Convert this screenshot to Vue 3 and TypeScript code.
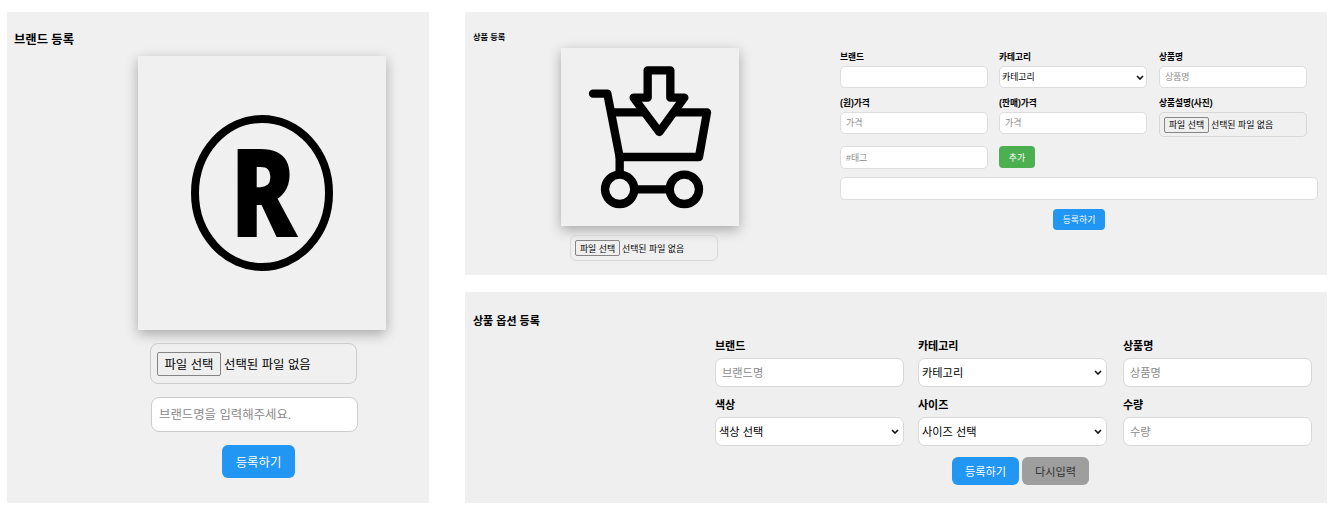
<script setup lang="ts">
interface Field {
  label: string
  kind: 'input' | 'select' | 'file'
  text: string
}

const productFields: Field[] = [
  { label: '브랜드', kind: 'input', text: '' },
  { label: '카테고리', kind: 'select', text: '카테고리' },
  { label: '상품명', kind: 'input', text: '상품명' },
  { label: '(원)가격', kind: 'input', text: '가격' },
  { label: '(판매)가격', kind: 'input', text: '가격' },
  { label: '상품설명(사진)', kind: 'file', text: '' },
]

const optionFields: Field[] = [
  { label: '브랜드', kind: 'input', text: '브랜드명' },
  { label: '카테고리', kind: 'select', text: '카테고리' },
  { label: '상품명', kind: 'input', text: '상품명' },
  { label: '색상', kind: 'select', text: '색상 선택' },
  { label: '사이즈', kind: 'select', text: '사이즈 선택' },
  { label: '수량', kind: 'input', text: '수량' },
]
</script>

<template>
  <main class="page">
    <section class="panel brand">
      <h2 class="brand-title">브랜드 등록</h2>
      <div class="preview brand-preview">
        <svg viewBox="0 0 248 274" width="248" height="274">
          <ellipse cx="124" cy="137" rx="67" ry="74" fill="none" stroke="#000" stroke-width="8" />
          <text x="92" y="181" class="logo-r" textLength="67" lengthAdjust="spacingAndGlyphs">R</text>
        </svg>
      </div>
      <div class="file brand-file">
        <button type="button" class="file-btn">파일 선택</button>
        <span>선택된 파일 없음</span>
      </div>
      <input class="control brand-input" type="text" placeholder="브랜드명을 입력해주세요." />
      <button type="button" class="btn blue brand-submit">등록하기</button>
    </section>

    <div class="right">
      <section class="panel product">
        <div class="product-left">
          <h2 class="product-title">상품 등록</h2>
          <div class="preview product-preview">
            <svg viewBox="303 113 532 534" width="178" height="178">
              <g fill="none" stroke="#000" stroke-width="25" stroke-linecap="round" stroke-linejoin="round">
                <path d="M398 250H441L478 440V490" />
                <path d="M455 306H545M650 306H740L716 440H478" />
                <path d="M562 180H630V262H672L597 365L520 262H562Z" />
                <circle cx="478" cy="537" r="44" />
                <circle cx="672" cy="537" r="44" />
                <path d="M522 537H628" />
              </g>
            </svg>
          </div>
          <div class="file product-file">
            <button type="button" class="file-btn">파일 선택</button>
            <span>선택된 파일 없음</span>
          </div>
        </div>

        <div class="product-form">
          <div class="product-grid">
            <div v-for="f in productFields" :key="f.label" class="product-field">
              <label>{{ f.label }}</label>
              <select v-if="f.kind === 'select'" class="control">
                <option>{{ f.text }}</option>
              </select>
              <div v-else-if="f.kind === 'file'" class="file grid-file">
                <button type="button" class="file-btn">파일 선택</button>
                <span>선택된 파일 없음</span>
              </div>
              <input v-else class="control" type="text" :placeholder="f.text" />
            </div>
          </div>
          <div class="tag-row">
            <input class="control tag-input" type="text" placeholder="#태그" />
            <button type="button" class="btn green">추가</button>
          </div>
          <input class="control wide-input" type="text" />
          <div class="product-actions">
            <button type="button" class="btn blue">등록하기</button>
          </div>
        </div>
      </section>

      <section class="panel option">
        <h2 class="option-title">상품 옵션 등록</h2>
        <div class="option-form">
          <div class="option-grid">
            <div v-for="f in optionFields" :key="f.label" class="option-field">
              <label>{{ f.label }}</label>
              <select v-if="f.kind === 'select'" class="control">
                <option>{{ f.text }}</option>
              </select>
              <input v-else class="control" type="text" :placeholder="f.text" />
            </div>
          </div>
          <div class="option-actions">
            <button type="button" class="btn blue">등록하기</button>
            <button type="button" class="btn gray">다시입력</button>
          </div>
        </div>
      </section>
    </div>
  </main>
</template>

<style>
html,
body {
  margin: 0;
  background: #fff;
}
</style>

<style scoped>
* {
  box-sizing: border-box;
}

.page {
  display: flex;
  gap: 36px;
  padding: 12px 0 0 7px;
  font-family: "Liberation Sans", "Noto Sans CJK KR", sans-serif;
  color: #000;
}

.panel {
  background: #f0f0f0;
}

h2 {
  margin: 0;
  font-weight: 700;
}

.preview {
  background: #f0f0f0;
  box-shadow: 0 4px 12px rgba(0, 0, 0, 0.3);
}

.preview svg {
  display: block;
}

.logo-r {
  font-family: "Open Sans", sans-serif;
  font-weight: 800;
  font-size: 123px;
  fill: #000;
}

.control {
  display: block;
  width: 100%;
  background: #fff;
  border: 1px solid #ccc;
  border-radius: 8px;
  font-family: inherit;
  color: #000;
  outline: none;
}

.control::placeholder {
  color: #8a8a8a;
}

select.control {
  appearance: none;
  -webkit-appearance: none;
  padding: 0;
  background-image: url("data:image/svg+xml,%3Csvg xmlns='http://www.w3.org/2000/svg' viewBox='0 0 8 5'%3E%3Cpath d='M1 1l3 3 3-3' fill='none' stroke='%23111' stroke-width='1.6'/%3E%3C/svg%3E");
  background-repeat: no-repeat;
}

.file {
  display: flex;
  align-items: center;
  border: 1px solid #ccc;
  border-radius: 8px;
}

.file-btn {
  flex: none;
  padding: 0;
  background: #efefef;
  border: 1px solid #858585;
  border-radius: 2px;
  font-family: inherit;
  font-size: inherit;
  color: #000;
}

.btn {
  display: block;
  padding: 0;
  border: none;
  border-radius: 6px;
  font-family: inherit;
  color: #fff;
}

.blue {
  background: #2196f3;
}

.green {
  background: #4caf50;
}

.gray {
  background: #9e9e9e;
  color: #333;
}

/* Brand panel */
.brand {
  flex: none;
  width: 422px;
  height: 491px;
  padding-top: 20px;
}

.brand-title {
  margin: 0 0 8px 7px;
  font-size: 12.3px;
  line-height: 16px;
}

.brand-preview {
  width: 248px;
  height: 274px;
  margin-left: 131px;
}

.brand-file {
  width: 207px;
  height: 41px;
  margin: 13px 0 0 143px;
  padding-left: 6px;
  gap: 3px;
  font-size: 12.4px;
}

.brand-file .file-btn {
  width: 64px;
  height: 24px;
}

.brand-input {
  width: 207px;
  height: 35px;
  margin: 13px 0 0 144px;
  padding: 0 7px;
  font-size: 12.4px;
}

.brand-submit {
  width: 73px;
  height: 33px;
  margin: 13px 0 0 215px;
  font-size: 12.4px;
}

/* Right column */
.right {
  flex: none;
  width: 862px;
  display: flex;
  flex-direction: column;
  gap: 17px;
}

/* Product panel */
.product {
  display: flex;
  height: 263px;
}

.product-left {
  flex: none;
  width: 375px;
  padding: 21px 0 0 8px;
}

.product-title {
  margin-bottom: 5px;
  font-size: 8.2px;
  line-height: 10px;
}

.product-preview {
  width: 178px;
  height: 178px;
  margin-left: 88px;
}

.product-file {
  width: 148px;
  height: 26px;
  margin: 9px 0 0 97px;
  padding-left: 4px;
  gap: 2px;
  border-radius: 6px;
  border-color: #d8d8d8;
  font-size: 8.9px;
}

.product-file .file-btn,
.grid-file .file-btn {
  width: 45px;
  height: 16px;
}

.product-form {
  padding-top: 39px;
}

.product-grid {
  display: grid;
  grid-template-columns: 159px 160px 148px;
  row-gap: 9px;
}

.product-field {
  width: 148px;
}

.product-field label,
.option-field label {
  display: block;
  font-weight: 700;
}

.product-field label {
  margin-bottom: 3px;
  font-size: 8.7px;
  line-height: 12px;
}

.product-field .control {
  height: 22px;
  padding: 0 5px;
  border-color: #ddd;
  border-radius: 5px;
  font-size: 8.9px;
}

.product-field select.control {
  padding: 0 0 0 2px;
  background-size: 8px 5px;
  background-position: right 2px center;
}

.grid-file {
  height: 25px;
  padding-left: 4px;
  gap: 2px;
  border-radius: 5px;
  border-color: #d8d8d8;
  font-size: 8.9px;
}

.tag-row {
  display: flex;
  gap: 11px;
  margin-top: 9px;
}

.tag-input {
  width: 148px;
  height: 23px;
  padding: 0 5px;
  border-color: #ddd;
  border-radius: 5px;
  font-size: 8.9px;
}

.green {
  width: 36px;
  height: 22px;
  border-radius: 4px;
  font-size: 8.9px;
}

.wide-input {
  width: 478px;
  height: 23px;
  margin-top: 8px;
  border-color: #ddd;
  border-radius: 5px;
}

.product-actions {
  margin: 9px 0 0 213px;
}

.product-actions .btn {
  width: 52px;
  height: 21px;
  border-radius: 4px;
  font-size: 8.9px;
}

/* Option panel */
.option {
  height: 211px;
  padding-top: 22px;
  background: #efefef;
}

.option-title {
  margin-left: 8px;
  font-size: 11px;
  line-height: 14px;
}

.option-form {
  margin: 11px 0 0 250px;
}

.option-grid {
  display: grid;
  grid-template-columns: 203px 205px 189px;
  row-gap: 11px;
}

.option-field {
  width: 189px;
}

.option-field label {
  margin-bottom: 5px;
  font-size: 11px;
  line-height: 14px;
}

.option-field .control {
  height: 29px;
  padding: 0 6px;
  border-color: #d8d8d8;
  border-radius: 7px;
  font-size: 11.2px;
}

.option-field select.control {
  padding: 0 0 0 3px;
  background-size: 8px 5px;
  background-position: right 4px center;
}

.option-actions {
  display: flex;
  gap: 3px;
  margin: 11px 0 0 237px;
}

.option-actions .btn {
  width: 67px;
  height: 28px;
  font-size: 11.2px;
}
</style>
